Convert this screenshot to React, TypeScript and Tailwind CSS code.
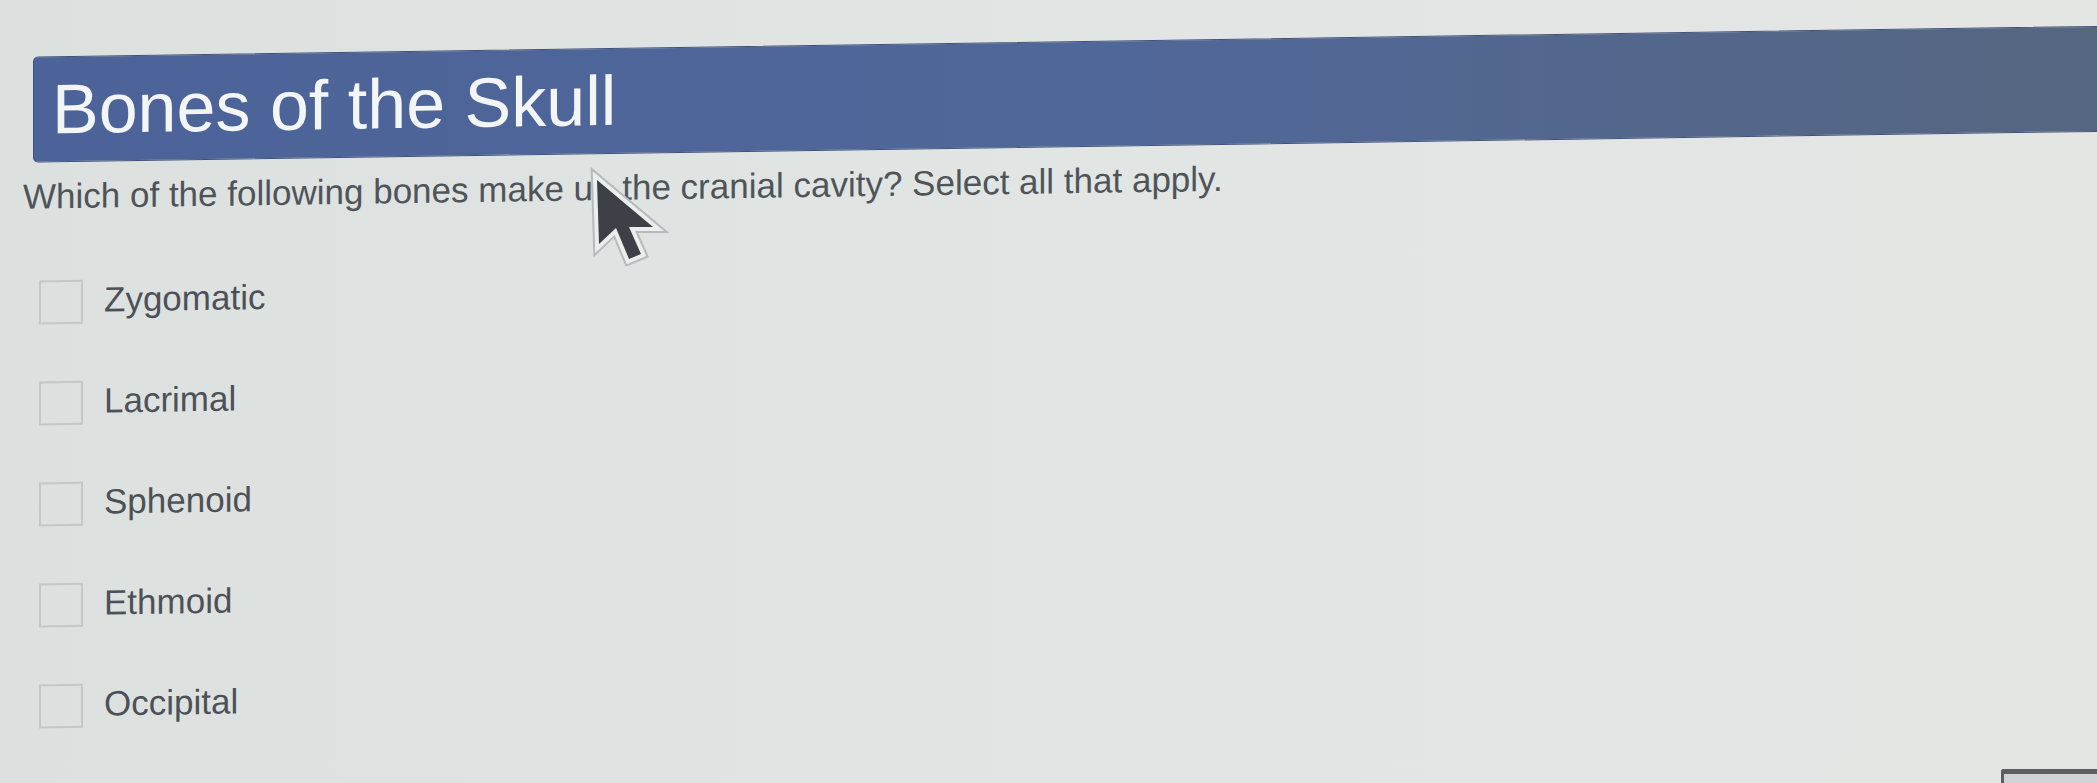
import React from 'react';

const options = ['Zygomatic', 'Lacrimal', 'Sphenoid', 'Ethmoid', 'Occipital'];

function Pointer() {
    // arrow cursor hovering over the prompt
    const pts = '13,22 15,86 32,70 45,101 57,96 45,69 69,69';
    return (
        <svg
            className="absolute left-[584px] top-[158px] w-[86px] h-[108px]"
            viewBox="0 0 86 108"
        >
            <polygon points={pts} fill="none" stroke="#b6babb" strokeWidth="12" strokeLinejoin="miter" />
            <polygon points={pts} fill="#3d4047" stroke="#eceeee" strokeWidth="8" strokeLinejoin="miter" />
            <polygon points={pts} fill="#3d4047" />
        </svg>
    );
}

export default function App() {
    return (
        <div className="relative w-full h-[783px] overflow-hidden bg-gradient-to-r from-[#dce1e0] via-[#e1e5e4] to-[#e4e6e4] font-[family-name:'Liberation_Sans',Arial,sans-serif]">
            <div className="origin-top-left skew-y-[-0.85deg] pt-[57px]">
                {/* Section header */}
                <div className="ml-[33px] w-[2120px] h-[106px] flex items-center pl-[18px] rounded-l-[5px] border border-[#415178] bg-gradient-to-r from-[#4b6398] via-[#50679a] to-[#56667f]">
                    <h1 className="text-[70px] leading-none text-[#f3f5f6]">Bones of the Skull</h1>
                </div>

                {/* Prompt */}
                <p className="mt-4 pl-[23px] text-[35px] leading-none text-[#4f5459]">
                    Which of the following bones make up the cranial cavity? Select all that apply.
                </p>

                {/* Choices */}
                <div className="mt-[67px] pl-[39px] flex flex-col gap-[57px]">
                    {options.map(name => (
                        <label key={name} className="flex items-center gap-[21px]">
                            <span className="w-[44px] h-[44px] border-2 border-[#c3c7c7]" />
                            <span className="pb-[6px] text-[35px] leading-none text-[#4d5157]">{name}</span>
                        </label>
                    ))}
                </div>
            </div>

            <Pointer />

            {/* edge of a button peeking in at the corner */}
            <div className="absolute left-[2001px] top-[769px] w-[100px] h-[20px] rounded-tl-[3px] border-t-[5px] border-l-[3px] border-[#5b5e62] bg-[#cfd3d3]" />
        </div>
    );
}
